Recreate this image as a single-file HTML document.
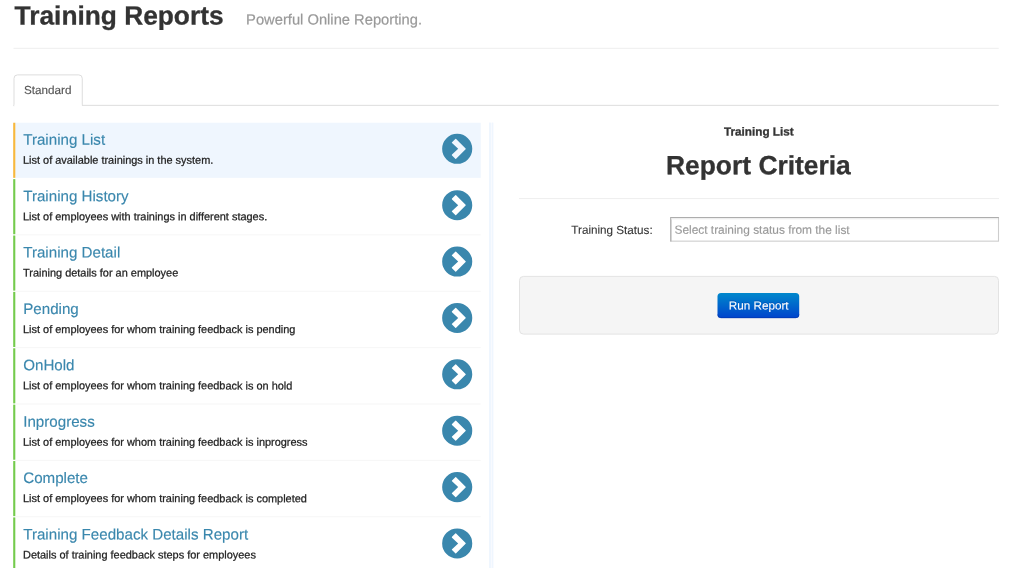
<!DOCTYPE html>
<html>
<head>
<meta charset="utf-8">
<title>Training Reports</title>
<style>
html,body{margin:0;padding:0;background:#fff;}
body{width:1024px;height:568px;overflow:hidden;font-family:"Liberation Sans",sans-serif;}
svg{position:absolute;left:0;top:0;display:block;}
text{font-family:"Liberation Sans",sans-serif;white-space:pre;}
#tx{filter:blur(0.3px);}
.b{font-weight:bold;}
</style>
</head>
<body>
<svg width="1024" height="568" viewBox="0 0 1024 568">
<defs>
<linearGradient id="bg" x1="0" y1="0" x2="0" y2="1"><stop offset="0" stop-color="#0088cc"/><stop offset="1" stop-color="#0044cc"/></linearGradient>
<path id="ic" fill="#3a87ad" fill-rule="evenodd" d="M0-15.05A15.05 15.05 0 1 1 0 15.05A15.05 15.05 0 1 1 0-15.05Z M-1.9-9.9L-5.2-6.6Q-5.6-6.2-5.2-5.8L1.0 0L-5.2 5.8Q-5.6 6.2-5.2 6.6L-1.9 9.9Q-1.5 10.3-1.1 9.9L8.4 0.4Q8.8 0 8.4-0.4L-1.1-9.9Q-1.5-10.3-1.9-9.9Z"/>
</defs>

<rect x="13.5" y="47.8" width="985.25" height="1" fill="#eee"/>
<rect x="13.5" y="104.85" width="985.25" height="1" fill="#ddd"/>
<path d="M14 106.2V78.4a3.5 3.5 0 0 1 3.5-3.5h61.25a3.5 3.5 0 0 1 3.5 3.5V105.85" fill="#fff" stroke="#ddd" stroke-width="1"/>
<rect x="14.5" y="104.6" width="67.25" height="1.6" fill="#fff"/>
<rect x="13.2" y="122.75" width="467.55" height="55.1" fill="#eff6fe"/>
<rect x="13.2" y="122.75" width="2.1" height="55.1" fill="#f9b83c"/>
<use href="#ic" x="457.2" y="148.80"/>
<rect x="13.2" y="179.13" width="2.1" height="55.1" fill="#74cb4c"/>
<use href="#ic" x="457.2" y="205.18"/>
<rect x="13.2" y="235.51" width="2.1" height="55.1" fill="#74cb4c"/>
<rect x="15.3" y="234.36" width="465.45" height="1" fill="#f6f6f6"/>
<use href="#ic" x="457.2" y="261.56"/>
<rect x="13.2" y="291.89" width="2.1" height="55.1" fill="#74cb4c"/>
<rect x="15.3" y="290.74" width="465.45" height="1" fill="#f6f6f6"/>
<use href="#ic" x="457.2" y="317.94"/>
<rect x="13.2" y="348.27" width="2.1" height="55.1" fill="#74cb4c"/>
<rect x="15.3" y="347.12" width="465.45" height="1" fill="#f6f6f6"/>
<use href="#ic" x="457.2" y="374.32"/>
<rect x="13.2" y="404.65" width="2.1" height="55.1" fill="#74cb4c"/>
<rect x="15.3" y="403.50" width="465.45" height="1" fill="#f6f6f6"/>
<use href="#ic" x="457.2" y="430.70"/>
<rect x="13.2" y="461.03" width="2.1" height="55.1" fill="#74cb4c"/>
<rect x="15.3" y="459.88" width="465.45" height="1" fill="#f6f6f6"/>
<use href="#ic" x="457.2" y="487.08"/>
<rect x="13.2" y="517.41" width="2.1" height="55.1" fill="#74cb4c"/>
<rect x="15.3" y="516.26" width="465.45" height="1" fill="#f6f6f6"/>
<use href="#ic" x="457.2" y="543.46"/>
<rect x="489" y="122.6" width="4.3" height="446" fill="#fafcff"/>
<rect x="489" y="122.6" width="1.95" height="446" fill="#eff6fe"/>
<rect x="491.8" y="122.6" width="1.5" height="446" fill="#eff6fe"/>
<rect x="519" y="198.1" width="480" height="1" fill="#eee"/>
<rect x="670.8" y="217.6" width="327.7" height="23.55" fill="#fff" stroke="#cdcdcd" stroke-width="1.1"/>
<path d="M670.8 241.4V217.6H998.8" fill="none" stroke="#adadad" stroke-width="1.15"/>
<rect x="671.2" y="218.2" width="326.8" height="1.2" fill="#f1f1f1"/>
<rect x="519.5" y="276.4" width="479" height="57.7" rx="4" fill="#f5f5f5" stroke="#e3e3e3" stroke-width="1"/>
<rect x="717.5" y="292.9" width="81.7" height="25.1" rx="3.5" fill="url(#bg)"/>
<path d="M717.7 314.5a3.3 3.3 0 0 0 3.3 3.3h74.7a3.3 3.3 0 0 0 3.3-3.3" fill="none" stroke="#002fa0" stroke-width="0.9" opacity="0.6"/>
<g id="tx">
<text transform="translate(14.60,24.40) rotate(0.03)" font-size="26.3" fill="#333" stroke="#333" stroke-width="0.3" class="b">Training Reports</text>
<text transform="translate(246.10,24.50) rotate(0.03)" font-size="14.72" fill="#999" stroke="#999" stroke-width="0.2">Powerful Online Reporting.</text>
<text transform="translate(24.00,94.00) rotate(0.03)" font-size="11.7" fill="#555" stroke="#555" stroke-width="0.15">Standard</text>
<text transform="translate(23.20,144.75) rotate(0.03)" font-size="15.15" fill="#3a87ad" stroke="#3a87ad" stroke-width="0.15">Training List</text>
<text transform="translate(23.00,163.75) rotate(0.03)" font-size="10.95" fill="#222" stroke="#222" stroke-width="0.25">List of available trainings in the system.</text>
<text transform="translate(23.20,201.13) rotate(0.03)" font-size="15.15" fill="#3a87ad" stroke="#3a87ad" stroke-width="0.15">Training History</text>
<text transform="translate(23.00,220.13) rotate(0.03)" font-size="10.95" fill="#222" stroke="#222" stroke-width="0.25">List of employees with trainings in different stages.</text>
<text transform="translate(23.20,257.51) rotate(0.03)" font-size="15.15" fill="#3a87ad" stroke="#3a87ad" stroke-width="0.15">Training Detail</text>
<text transform="translate(23.00,276.51) rotate(0.03)" font-size="10.95" fill="#222" stroke="#222" stroke-width="0.25">Training details for an employee</text>
<text transform="translate(23.20,313.89) rotate(0.03)" font-size="15.15" fill="#3a87ad" stroke="#3a87ad" stroke-width="0.15">Pending</text>
<text transform="translate(23.00,332.89) rotate(0.03)" font-size="10.95" fill="#222" stroke="#222" stroke-width="0.25">List of employees for whom training feedback is pending</text>
<text transform="translate(23.20,370.27) rotate(0.03)" font-size="15.15" fill="#3a87ad" stroke="#3a87ad" stroke-width="0.15">OnHold</text>
<text transform="translate(23.00,389.27) rotate(0.03)" font-size="10.95" fill="#222" stroke="#222" stroke-width="0.25">List of employees for whom training feedback is on hold</text>
<text transform="translate(23.20,426.65) rotate(0.03)" font-size="15.15" fill="#3a87ad" stroke="#3a87ad" stroke-width="0.15">Inprogress</text>
<text transform="translate(23.00,445.65) rotate(0.03)" font-size="10.95" fill="#222" stroke="#222" stroke-width="0.25">List of employees for whom training feedback is inprogress</text>
<text transform="translate(23.20,483.03) rotate(0.03)" font-size="15.15" fill="#3a87ad" stroke="#3a87ad" stroke-width="0.15">Complete</text>
<text transform="translate(23.00,502.03) rotate(0.03)" font-size="10.95" fill="#222" stroke="#222" stroke-width="0.25">List of employees for whom training feedback is completed</text>
<text transform="translate(23.20,539.41) rotate(0.03)" font-size="15.15" fill="#3a87ad" stroke="#3a87ad" stroke-width="0.15">Training Feedback Details Report</text>
<text transform="translate(23.00,558.41) rotate(0.03)" font-size="10.95" fill="#222" stroke="#222" stroke-width="0.25">Details of training feedback steps for employees</text>
<text transform="translate(758.80,135.50) rotate(0.03)" font-size="11.7" fill="#333" stroke="#333" stroke-width="0.3" class="b" text-anchor="middle">Training List</text>
<text transform="translate(758.40,174.20) rotate(0.03)" font-size="26.4" fill="#333" stroke="#333" stroke-width="0.3" class="b" text-anchor="middle">Report Criteria</text>
<text transform="translate(652.70,233.90) rotate(0.03)" font-size="11.7" fill="#333" stroke="#333" stroke-width="0.1" text-anchor="end">Training Status:</text>
<text transform="translate(674.50,233.80) rotate(0.03)" font-size="11.9" fill="#999" stroke="#999" stroke-width="0.15">Select training status from the list</text>
<text transform="translate(758.66,308.60) rotate(0.03)" font-size="11.7" fill="#00339a" stroke="#00339a" stroke-width="0" text-anchor="middle" opacity="0.45">Run Report</text>
<text transform="translate(758.66,309.50) rotate(0.03)" font-size="11.7" fill="#fff" stroke="#fff" stroke-width="0.1" text-anchor="middle">Run Report</text>
</g>
</svg>
</body>
</html>
